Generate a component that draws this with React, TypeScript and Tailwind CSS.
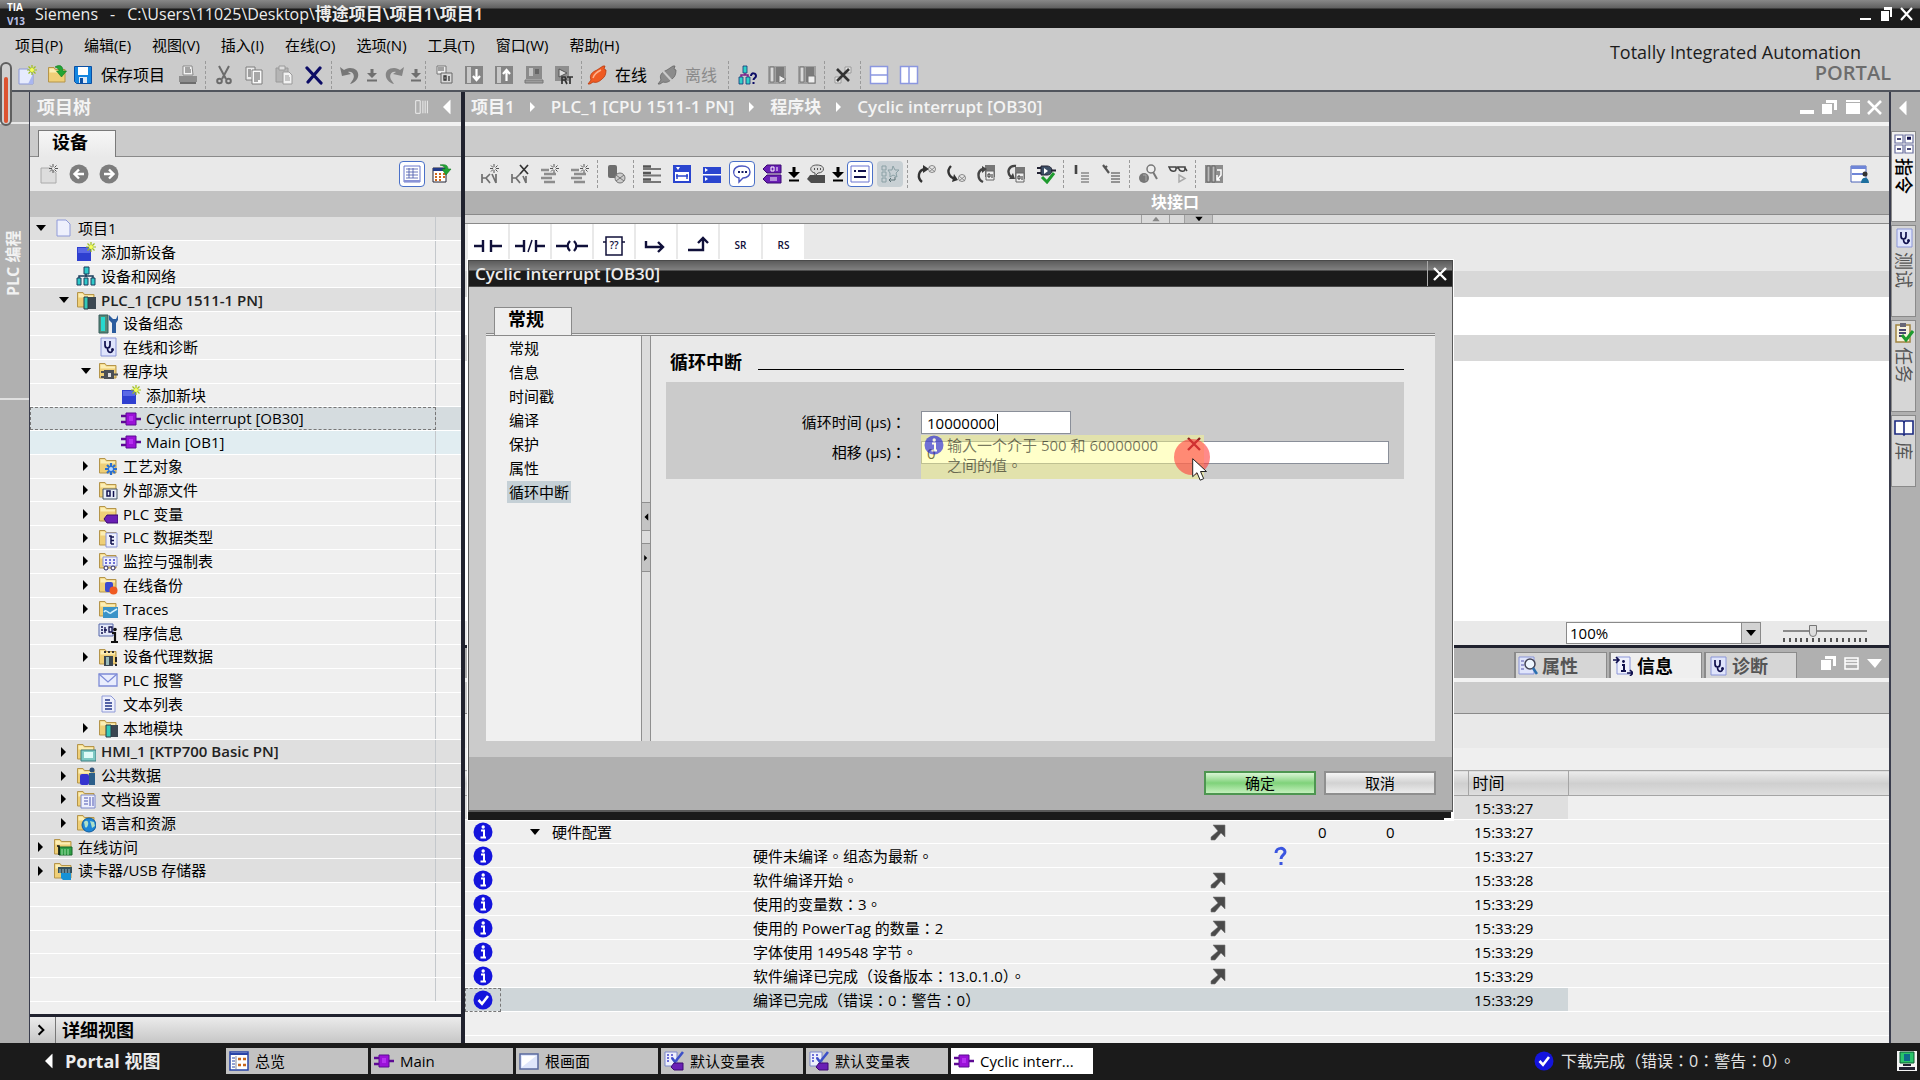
import React, { useState } from "react";

type Draw = React.ReactNode;

const folder = (
  <g>
    <path d="M1.5 2.5h5.5l1.5 2H18v12.500H1.500z" fill="#efcf77" stroke="#b5954a" />
    <path d="M2.500 3.500h4l1.500 2h9v2H2.500z" fill="#fbeeb5" />
  </g>
);
const star = (
  <g stroke="#9fbf1c" strokeWidth="1.200">
    <path d="M15 0v10M10 5h10M11.500 1.500l7 7M18.500 1.500l-7 7" />
    <circle cx="15" cy="5" r="2" fill="#f6ff5a" stroke="none" />
  </g>
);
const grayStar = <path d="M14 0v3M14 6v3M10 4.500h3M16 4.500h3M11 1.500l2 2M15.500 5.500l2 2M17.500 1.500l-2 2M13 5.500l-2 2" stroke="#555" strokeWidth="1" />;
const page = <path d="M4 2h9l4 4v12H4z" fill="#eef0fc" stroke="#8f9ad8" />;
const plug = (
  <path d="M1 19l3-4c-2-5 1-8 6-10l6-4h2l-1 3 2 1c0 4-1 7-4 9-3 3-6 4-9 3l-3 2z" />
);

const icons: Record<string, Draw> = {
  newProject: (<g><path d="M2 4h9l5 5v10H2z" fill="#e6ebfd" stroke="#8a97d6" /><path d="M11 19l5-10v10z" fill="#a9b6f0" />{star}</g>),
  openProject: (<g>{folder}<path d="M8 2c5-3 8-1 8 4h3.500l-5 6-5-6H12c0-2-1-3-4-4z" fill="#22a534" stroke="#0d7a1e" strokeWidth=".6" /></g>),
  save: (<g><path d="M1.500 1.500h17v17h-15l-2-2z" fill="#1486e0" stroke="#0b4fa3" /><path d="M5 2h10v8H5z" fill="#fff" /><path d="M6 12h8v6H6z" fill="#dfe9f5" /><path d="M7 13h3v5H7z" fill="#0b4fa3" /></g>),
  print: (<g><path d="M5 1h9l1 9H5z" fill="#f4f4f4" stroke="#888" /><path d="M7 3h5M7 5h6M7 7h6" stroke="#555" /><path d="M1 11h18v6H1z" fill="#8e8e8e" /><path d="M2 17h16v2H2z" fill="#6d6d6d" /></g>),
  cut: (<g fill="none" stroke="#6b6b6b" strokeWidth="2"><path d="M5 1l7 13M15 1L8 14" /><circle cx="5.500" cy="16" r="2.300" /><circle cx="14.500" cy="16" r="2.300" /></g>),
  copy: (<g fill="#ececec" stroke="#7d7d7d"><path d="M2 2h9v13H2z" /><path d="M8 5h10v14H8z" fill="#fafafa" /><path d="M10 8h6M10 10h6M10 12h6M10 14h6M10 16h4M4 5h3M4 7h3M4 9h3M4 11h3" stroke="#555" /></g>),
  paste: (<g stroke="#9a9a9a"><path d="M2 3h12v14H2z" fill="#b5b5b5" /><path d="M5 1h6v4H5z" fill="#ddd" /><path d="M9 7h6l3 3v9H9z" fill="#f2f2f2" /><path d="M11 11h4M11 13h5M11 15h5" /></g>),
  del: <path d="M3 3l14 15M16 3L4 17" stroke="#0c0c66" strokeWidth="3.200" strokeLinecap="round" />,
  undo: <path d="M0 2l2 9 9-2-3-2c5-1 8 4 4 9l-2 3C21 16 21 3 10 3c-3 0-4 1-6 2z" fill="#777" />,
  redo: <path d="M20 2l-2 9-9-2 3-2c-5-1-8 4-4 9l2 3C-1 16-1 3 10 3c3 0 4 1 6 2z" fill="#858585" />,
  compile: (<g><path d="M3 1h9v8H3z" fill="#eee" stroke="#777" /><path d="M4 3h6M4 5h6" stroke="#555" /><path d="M7 8h11v10H7z" fill="#d8d8d8" stroke="#666" /><path d="M10 11h2v4h-2zM15 11v5" fill="none" stroke="#333" strokeWidth="1.300" /></g>),
  download: (<g><path d="M1 1h18v18H1z" fill="#858585" /><path d="M3 2h4v16H3z" fill="#c9c9c9" /><path d="M12.500 4v10M9 11l3.500 4 3.500-4" fill="none" stroke="#fff" strokeWidth="2.200" /></g>),
  upload: (<g><path d="M1 1h18v18H1z" fill="#858585" /><path d="M3 2h4v16H3z" fill="#c9c9c9" /><path d="M12.500 16V6M9 9l3.500-4L16 9" fill="none" stroke="#fff" strokeWidth="2.200" /></g>),
  simulate: (<g><path d="M2 1h16v13H2z" fill="#8b8b8b" /><path d="M5 3h4v8H5z" fill="#c4c4c4" /><path d="M11 4h4v5h-4z" fill="#666" /><path d="M1 15h18v3H1z" fill="#9c9c9c" stroke="#777" /></g>),
  runtime: (<g><path d="M1 1h14v15H1z" fill="#8e8e8e" /><path d="M5 4l8 4-8 4z" fill="#ddd" stroke="#555" /><path d="M8 19v-7h3l1 2-1 1H8m3 0l2 4M13 12h6M16 12v7" fill="none" stroke="#333" strokeWidth="1.700" /></g>),
  online: <g fill="#ef5a22" stroke="#b83a0e" strokeWidth=".8">{plug}<path d="M6 13c1-4 4-6 8-8" fill="none" stroke="#ffb08a" strokeWidth="1.500" /></g>,
  offline: (<g fill="#8b8b8b" stroke="#666" strokeWidth=".8">{plug}<path d="M5 5l10 11" stroke="#cbcbcb" strokeWidth="2" /></g>),
  access: (<g><path d="M6 1h4v7H6zM2 12h4v7H2zM9 12h4v7H9z" fill="#2fd0c8" stroke="#137" strokeWidth=".8" /><path d="M8 8v2M4 12v-2h7v2" fill="none" stroke="#7a1e8a" strokeWidth="1.500" /><path d="M14 11c0-4 5-3 5 0 0 2-2.500 2-2.500 4M16.500 17v2" fill="none" stroke="#0c0c66" strokeWidth="2" /></g>),
  startCpu: (<g><path d="M1 1h18v18H1z" fill="#a0a0a0" /><path d="M3 2h4v15H3z" fill="#d9d9d9" stroke="#777" /><path d="M9 2h8v15H9z" fill="#7b7b7b" /><path d="M12 10l7 4-7 4z" fill="#eee" stroke="#777" /></g>),
  stopCpu: (<g><path d="M1 1h18v18H1z" fill="#a0a0a0" /><path d="M3 2h4v15H3z" fill="#d9d9d9" stroke="#777" /><path d="M9 2h8v15H9z" fill="#7b7b7b" /><path d="M11 11h7v7h-7z" fill="#eee" stroke="#777" /></g>),
  crossRef: (<g><path d="M12 2h6v6h-6zM2 12h6v6H2z" fill="#e8e8e8" stroke="#999" /><path d="M4 4l12 12M16 4L4 16" stroke="#333" strokeWidth="2.600" /></g>),
  splitH: (<g fill="#fff" stroke="#8b97e0" strokeWidth="1.500"><path d="M1.500 1.500h17v17h-17z" /><path d="M1.500 10h17" /></g>),
  splitV: (<g fill="#fff" stroke="#8b97e0" strokeWidth="1.500"><path d="M1.500 1.500h17v17h-17z" /><path d="M10 1.500v17" /></g>),
  dd: (<g fill="#6f6f6f"><path d="M8.500 4h3v4H15l-5 5-5-5h3.500zM5 14.500h10v2H5z" /></g>),
  ddBlack: (<g fill="#000"><path d="M8.500 3h3v5H16l-6 6-6-6h4.500zM5 15.500h10v2H5z" /></g>),
  newItem: (<g><path d="M2 4h9l6 5v10H2z" fill="#ddd" stroke="#aaa" />{grayStar}</g>),
  back: (<g><circle cx="10" cy="10" r="9.500" fill="#7d7d7d" /><path d="M15 10H6M10 5.500L5.500 10l4.500 4.500" fill="none" stroke="#fff" strokeWidth="2.400" /></g>),
  forward: (<g><circle cx="10" cy="10" r="9.500" fill="#7d7d7d" /><path d="M5 10h9M10 5.500l4.500 4.500-4.500 4.500" fill="none" stroke="#fff" strokeWidth="2.400" /></g>),
  list: (<g><path d="M2 2h16v16H2z" fill="#fff" stroke="#6a78cc" /><path d="M4 5h12M4 8h12M4 11h12M4 14h12M7 4v10M11 4v10" stroke="#4454a8" strokeWidth=".8" /><path d="M2 17h16" stroke="#8a93d6" strokeWidth="2" /></g>),
  gridGo: (<g><path d="M1 4h13v14H1z" fill="#fff" stroke="#223" /><path d="M1 4h13v3H1z" fill="#223a88" /><path d="M3 10h2M7 10h2M11 10h2M3 13h2M7 13h2M11 13h2M3 16h2M7 16h2" stroke="#d0661a" strokeWidth="2" /><path d="M8 1c5-1 8 0 8 4h3l-5 6-4-6h3c0-2-1-3-5-4z" fill="#22a534" stroke="#0d7a1e" strokeWidth=".6" /></g>),
  netIns: (<g fill="none" stroke="#6f6f6f" strokeWidth="1.700"><path d="M2 10v9M2 14h4M10 10l-4 4 4 5M12 10l4 9M16 10v9" />{grayStar}</g>),
  netDel: (<g fill="none" stroke="#6f6f6f" strokeWidth="1.700"><path d="M2 10v9M2 14h4M10 10l-4 4 4 5M13 12l3 7M16 12v7" /><path d="M10 1l8 9M18 1l-8 9" stroke="#333" /></g>),
  rowIns: (<g><path d="M1 6h8M4 10h12M1 14h11M4 18h11" stroke="#8d8d8d" strokeWidth="2.400" />{grayStar}</g>),
  dbStack: (<g><rect x="2" y="1" width="9" height="13" rx="2" fill="#6e6e6e" /><circle cx="14" cy="14" r="5" fill="#ccc" stroke="#777" /><path d="M10 11l8 6M18 11l-8 6" stroke="#777" /></g>),
  treeGray: (<g><path d="M1 2.500h8M1 9h8M1 15.500h8" stroke="#555" strokeWidth="2.600" /><path d="M1 5h18M1 11.500h18M1 18h18" stroke="#777" strokeWidth="2" /></g>),
  netOpen: (<g><path d="M1 1h18v18H1z" fill="#2a45cf" /><path d="M3 8h14v9H3z" fill="#fff" /><path d="M4 12h12M5 10v5M15 10v5" stroke="#2a45cf" strokeWidth="1.500" /><path d="M4 3h4l-2 3z" fill="#fff" /></g>),
  netClose: (<g><path d="M1 3h18v16H1z" fill="#2a45cf" /><path d="M3 4l3 2-3 2zM3 13l3 2-3 2zM1 10h18v1.500H1z" fill="#fff" /></g>),
  comment: (<g><path d="M10 2c11 0 10 12 1 12l-4 4v-4C-1 12 0 2 10 2z" fill="#fff" stroke="#4a55c0" strokeWidth="1.400" /><path d="M6 8h2M9.500 8h2M13 8h2" stroke="#111a66" strokeWidth="2" /></g>),
  tagPurple: (<g><path d="M5 1h14v8H5L1 5zM5 11h14v8H5l-4-4z" fill="#6a1fb5" stroke="#3c0a73" /><path d="M9 3h3v4H9zM15 3v4M8 14h7M8 16h7" fill="none" stroke="#fff" /></g>),
  tagGray: (<g><path d="M7 11h12v8H5l-4-4 3-4z" fill="#4d4d4d" /><path d="M11 1c9 0 8 8 1 8l-3 3V9C3 8 3 1 11 1z" fill="#ddd" stroke="#555" /><path d="M8 5h1M11 5h1M14 5h1" stroke="#222" strokeWidth="1.500" /></g>),
  details: (<g><path d="M1 2h18v16H1z" fill="#fff" stroke="#6a75d0" /><path d="M4 7h2M8 7h8M4 13h12" stroke="#10104d" strokeWidth="2" /></g>),
  favGray: (<g stroke="#8aa0a5" fill="none"><path d="M2 2h4v4H2zM2 8h4v4H2zM2 14h4v4H2z" /><path d="M13 2l2 4 4 0-3 3 1 4-4-2-3 2 0-4-2-3 4 0z" /><path d="M15 13v3H9M11 14l-2 2 2 2" stroke="#5a7075" /></g>),
  arrUp: (<g fill="none"><path d="M6 18C1 14 2 6 9 5" stroke="#333" strokeWidth="2.400" /><path d="M7 1l6 4-6 4z" fill="#333" /><circle cx="16" cy="5" r="3.500" stroke="#888" /><path d="M13 3l6 5M19 3l-6 5" stroke="#888" /></g>),
  arrDown: (<g fill="none"><path d="M5 2c-5 5-2 11 4 13" stroke="#333" strokeWidth="2.400" /><path d="M6 18l6-2-4-6z" fill="#333" /><circle cx="16" cy="14" r="3.500" stroke="#888" /><path d="M13 12l6 5M19 12l-6 5" stroke="#888" /></g>),
  syncA: (<g><path d="M9 1h10v12H9z" fill="#777" /><path d="M10 7h8v9h-8z" fill="#eee" stroke="#666" /><path d="M12 10h2v3h-2zM16 10v4" fill="none" stroke="#333" /><path d="M7 18C1 15 1 7 7 5" fill="none" stroke="#444" strokeWidth="2.400" /><path d="M6 2l5 3-5 4z" fill="#444" /></g>),
  syncB: (<g><path d="M9 3h10v12H9z" fill="#777" /><path d="M10 9h8v9h-8z" fill="#eee" stroke="#666" /><path d="M12 12h2v3h-2zM16 12v4" fill="none" stroke="#333" /><path d="M10 2C3 1 0 8 5 13" fill="none" stroke="#444" strokeWidth="2.400" /><path d="M3 15l6 0-2-6z" fill="#444" /></g>),
  check: (<g><path d="M5 2h6c4 0 5 3 5 4.500S15 11 11 11H5z" fill="#3d4f66" stroke="#223" /><path d="M1 4h4M1 9h4M15 6.500h5" stroke="#223" strokeWidth="2" /><path d="M8 4l4 3-4 3z" fill="#fff" /><path d="M6 13l5 5 7-9" fill="none" stroke="#1e9a2e" strokeWidth="3" /></g>),
  indent: (<g><path d="M4 1v9" stroke="#444" strokeWidth="2.600" /><path d="M9 9h8M9 12h8M9 15h8M9 18h8" stroke="#888" strokeWidth="1.700" /></g>),
  outdent: (<g><path d="M1 1l6 8M5 2L3 4" stroke="#555" strokeWidth="2.200" /><path d="M9 9h9M9 12h9M9 15h9M9 18h9" stroke="#777" strokeWidth="1.700" /></g>),
  findTag: (<g><circle cx="13" cy="5" r="4" fill="#eee" stroke="#777" strokeWidth="1.500" /><path d="M15 8l4 7" stroke="#777" strokeWidth="2" /><circle cx="6" cy="14" r="5" fill="#777" /><path d="M5 11h3v6" stroke="#aaa" fill="none" /></g>),
  glasses: (<g fill="none" stroke="#444" strokeWidth="1.500"><path d="M1 3h7v2c0 3-5 3-6 0zM10 3h7v2c0 3-5 3-6 0z" /><path d="M8 4h2M17 4l2 3" /><path d="M11 11l6 3.500-6 3.500z" stroke="#aaa" /></g>),
  snapshot: (<g><path d="M1 1h18v18H1z" fill="#8d8d8d" /><path d="M3 2h3v16H3zM8 2h3v16H8z" fill="#bbb" stroke="#666" /><path d="M13 6h4v5l-4 5M13 11v5h3" stroke="#fff" fill="none" strokeWidth="1.500" /></g>),
  layoutUser: (<g><path d="M1 2h15v16H1z" fill="#fff" stroke="#4a62b8" /><path d="M1 2h15v3H1z" fill="#6f86d8" /><path d="M2 10h14" stroke="#6f86d8" strokeWidth="2" /><circle cx="15" cy="10" r="2.500" fill="#333" /><path d="M11 19c0-7 8-7 8 0z" fill="#1d6f9e" /></g>),
  project: page,
  addNew: (<g><path d="M1 5h14v14H1z" fill="#2e3fd0" /><path d="M2 6h12v5H2z" fill="#5a68e6" />{star}</g>),
  network: (<g><path d="M8 1h5v7H8zM1 12h4v7H1zM8 12h4v7H8zM15 12h4v7h-4z" fill="#2fc9c9" stroke="#1a3d5c" /><path d="M10 8v3M3 12v-2h14v2" fill="none" stroke="#1a3d5c" strokeWidth="1.500" /></g>),
  plc: (<g>{folder}<path d="M8 7h12v12H8z" fill="#3a4650" /><path d="M8 7h4v12H8z" fill="#35c9b8" stroke="#2a3a44" /></g>),
  config: (<g><path d="M1 1h9v18H1z" fill="#587" stroke="#365a5a" /><path d="M3 3h4v14H3z" fill="#27d9cf" /><path d="M11 1v5l3 3v10h4V9l2-3V1l-2 4h-3z" fill="#2b5c9e" /></g>),
  diag: (<g><path d="M3 1h15v18H3z" fill="#dfe4fb" stroke="#8a95d8" /><path d="M7 4v4c0 4 5 4 5 0V4M9.500 11c0 6 5 5 5 2" fill="none" stroke="#10104d" strokeWidth="1.700" /><circle cx="14.500" cy="12.500" r="1.500" fill="#10104d" /></g>),
  blocks: (<g>{folder}<path d="M6 9h10v9H6z" fill="#4a4f55" /><path d="M3 11h4M3 16h4M15 13.500h5" stroke="#4a4f55" strokeWidth="2" /><path d="M10 12h3v4h-3z" fill="#ddd" /></g>),
  ob: (<g><path d="M5 4h10v12H5z" fill="#9a12d8" stroke="#5d0a94" /><path d="M0 7h5M0 13h5M15 10h5" stroke="#5d0a94" strokeWidth="2.600" /><path d="M8 7h4v5H8z" fill="#b530f0" /></g>),
  tech: (<g>{folder}<path d="M13 7v12M7 13h12M9 9l8 8M17 9l-8 8" stroke="#2a6fd0" strokeWidth="2.200" /><circle cx="13" cy="13" r="2" fill="#bcd8ff" /></g>),
  source: (<g>{folder}<path d="M5 9h14v10H5z" fill="#e8eef8" stroke="#456" /><path d="M9 11h3v5H9zM15.500 11v6" fill="none" stroke="#10104d" strokeWidth="1.500" /></g>),
  tags: (<g>{folder}<path d="M9 11h11v8H9l-3-4z" fill="#6a1fb5" stroke="#3c0a73" /></g>),
  types: (<g>{folder}<path d="M8 5h11v14H8z" fill="#eef0fc" stroke="#8a95d8" /><path d="M11 8h2v8M13 9h3M13 12.500h3M13 16h3" stroke="#10104d" fill="none" strokeWidth="1.500" /></g>),
  watch: (<g>{folder}<path d="M5 6h14v9H5z" fill="#eef0fc" stroke="#8a95d8" /><path d="M7 9h2M11 9h2M15 9h2M7 12h2M11 12h2M15 12h2" stroke="#44c" strokeWidth="1.500" /><circle cx="8" cy="17" r="2" fill="#fff" stroke="#226" /><circle cx="15" cy="17" r="2" fill="#fff" stroke="#226" /></g>),
  backup: (<g>{folder}<rect x="7" y="7" width="8" height="10" rx="2" fill="#3a49d0" /><circle cx="15.500" cy="15.500" r="4" fill="#ef5a22" /></g>),
  traces: (<g>{folder}<path d="M5 8h15v11H5z" fill="#3a93c8" /><path d="M6 13c3-4 5 4 8 0l5-3" fill="none" stroke="#d7f3ff" strokeWidth="1.500" /></g>),
  progInfo: (<g><path d="M1 1h14v12H1z" fill="#e3e8f8" stroke="#5566aa" /><path d="M3 4h2M3 7h2M3 10h2M7 4v6M6 7h3M11 4h3v5h-3z" fill="none" stroke="#10104d" strokeWidth="1.300" /><path d="M14 10h3v8M13 19h7" stroke="#111" strokeWidth="2.200" fill="none" /><circle cx="17" cy="6.500" r="1.800" fill="#111" /></g>),
  proxy: (<g>{folder}<path d="M6 9h9v10H6z" fill="#3a4650" /><path d="M6 5h2M10 5h2M14 5h2" stroke="#333" strokeWidth="2" /><path d="M8 10h3v8H8z" fill="#9bb" /><path d="M18 10v5M18 17v2" stroke="#222" strokeWidth="2" /></g>),
  mail: (<g fill="#e9edfd" stroke="#7d8bd6" strokeWidth="1.300"><path d="M1 4h18v12H1z" /><path d="M1 4l9 8 9-8" fill="none" /></g>),
  textList: (<g>{page}<path d="M7 6h5M7 9h7M7 12h7M7 15h7" stroke="#223388" strokeWidth="1.600" /></g>),
  modules: (<g>{folder}<path d="M8 7h12v12H8z" fill="#3a4650" /><path d="M8 7h5v12H8z" fill="#35c9b8" stroke="#2a3a44" /></g>),
  hmi: (<g>{folder}<path d="M5 8h15v11H5z" fill="#7fc9c4" stroke="#3d7d80" /><path d="M8 10h9v6H8z" fill="#dffbf8" /></g>),
  common: (<g>{folder}<rect x="4" y="8" width="9" height="11" rx="2" fill="#3434cf" /><circle cx="16" cy="4" r="2.500" fill="#2c4f78" /><path d="M13 7h6v12h-6z" fill="#2c5f8a" /></g>),
  docs: (<g>{folder}<path d="M5 6h14v13H5z" fill="#eef0fc" stroke="#7d88cc" /><path d="M8 9h4M8 12h4M8 15h4M14 8v9M17 8v9" stroke="#4a55b0" /></g>),
  lang: (<g>{folder}<circle cx="13" cy="12" r="7" fill="#1d86d6" stroke="#0f5c9e" /><path d="M8 9c3-3 5 0 4 3s-2 3-3 2zM14 8l4 1 1 4-3 2-1-4z" fill="#aee0c8" /></g>),
  access2: (<g>{folder}<path d="M6 10h13v8H6z" fill="#2f9e45" stroke="#17662a" /><path d="M9 12v6M12 12v6M15 12v6" stroke="#9fe0a8" /><path d="M4 9h2v9" stroke="#111" strokeWidth="1.500" fill="none" /></g>),
  card: (<g>{folder}<path d="M5 6h14v6H5z" fill="#35505c" /><path d="M7 8v4M10 8v4M13 8v4M16 8v4" stroke="#9bc" /><path d="M8 12h10v7H10l-2-2z" fill="#1692d6" /></g>),
  overview: (<g><path d="M1 1h18v18H1z" fill="#fff" stroke="#2a45a8" strokeWidth="1.500" /><path d="M1 3h18" stroke="#2a45a8" strokeWidth="2" /><path d="M3 7h3M3 10h3M3 13h3M3 16h3" stroke="#2a45a8" /><path d="M9 8h3M14 8h3M9 14h3M14 14h3" stroke="#c8661a" strokeWidth="2.500" /><path d="M7 5v13" stroke="#889" /></g>),
  screen: (<g><path d="M1 3h18v15H1z" fill="#dfe6fb" stroke="#5a6a9e" strokeWidth="1.500" /><path d="M3 5h14l-14 11z" fill="#fff" /></g>),
  tagTable: (<g><path d="M1 1h12v14H1z" fill="#eef0fc" stroke="#7d88cc" /><path d="M3 4h2M7 4h2M3 7h2M7 7h2M3 10h2" stroke="#44c" strokeWidth="1.500" /><path d="M8 7l3 4 8-10" fill="none" stroke="#3c50c8" strokeWidth="2.600" /><path d="M10 12h9v7h-9l-3-3z" fill="#6a1fb5" stroke="#3c0a73" /></g>),
  props: (<g><path d="M1 1h15v17H1z" fill="#dfe4fb" stroke="#8a95d8" /><path d="M3 5h3M3 9h3M3 13h3" stroke="#55a" /><circle cx="12" cy="8" r="5" fill="#eef6ff" stroke="#445" strokeWidth="1.500" /><path d="M15 12l4 6" stroke="#2a6fb0" strokeWidth="2.600" /></g>),
  infoTab: (<g><path d="M4 1h13v17H4z" fill="#eef0fc" stroke="#8a95d8" /><path d="M9 9h2v6M8 15h5" fill="none" stroke="#10104d" strokeWidth="2" /><circle cx="10.500" cy="5.500" r="1.400" fill="#10104d" /><path d="M0 4h5M3 1l3 3-3 3M14 17h5M17 14l3 3-3 3" fill="none" stroke="#10104d" strokeWidth="1.600" /></g>),
  instr: (<g fill="#fff" stroke="#6a70a0" strokeWidth="1.200"><path d="M1 1h8v8H1zM11 1h8v8h-8zM1 11h8v8H1zM11 11h8v8h-8z" /><path d="M3 5h4M13 5h4M13 3.500h4M3 15h4M13 15h4" stroke="#10104d" strokeWidth="1.500" /></g>),
  tasks: (<g><path d="M2 2h14v17H2z" fill="#f6f1dc" stroke="#a08440" strokeWidth="1.500" /><path d="M6 0h6v4H6z" fill="#667" /><path d="M5 7h7M5 10h7M5 13h5" stroke="#10104d" strokeWidth="1.500" /><path d="M8 12l4 5 7-9" fill="none" stroke="#1e9a2e" strokeWidth="3" /></g>),
  book: (<g fill="#fff" stroke="#1c2a80" strokeWidth="1.600"><path d="M1 3h8l1 1 1-1h8v13h-8l-1 1-1-1H1z" /><path d="M10 4v13" /></g>),
  info: (<g><circle cx="10" cy="10" r="9.500" fill="#1414dc" /><circle cx="10.200" cy="5" r="1.700" fill="#fff" /><path d="M8 8.500h3V15M7.500 15.500h5.500" fill="none" stroke="#fff" strokeWidth="2" /></g>),
  ok: (<g><circle cx="10" cy="10" r="9.500" fill="#1414dc" /><path d="M5.500 10l3.500 3.800L15 6" fill="none" stroke="#fff" strokeWidth="2.600" /></g>),
  goto: <path d="M5 3h12v12l-4-4-6 7H3v-3l7-6z" fill="#4a4a4a" stroke="#777" strokeWidth=".6" />,
  help: (<g><path d="M6 7c0-6 9-6 9-1 0 3-4 3-4 7M11 16v3" fill="none" stroke="#3a55e0" strokeWidth="3" /></g>),
  pc: (<g><path d="M0 0h20v20H0z" fill="#f4f4f4" /><path d="M3 1h14v11H3z" fill="#29c46a" stroke="#0a5a30" /><path d="M7 3h6v7H7z" fill="#0c6a8a" /><path d="M6 13h8v2H6zM2 16h16v3H2z" fill="#223" /></g>),
  pause: (<g fill="none" stroke="#f4f4f4"><path d="M3 3h5v14H3z" /><path d="M11 3v14M13.500 3v14M16 3v14" /></g>),
};

function Ic({ n, s = "w-5 h-5" }: { n: string; s?: string }) {
  return (
    <svg viewBox="0 0 20 20" className={`${s} shrink-0`} fill="none" aria-hidden="true">
      {icons[n]}
    </svg>
  );
}

function Tool({ n, look = "" }: { n: string; look?: string }) {
  return (
    <span className="flex w-[30px] shrink-0 justify-center">
      <button type="button" aria-label={n} className={`flex h-[26px] w-[26px] items-center justify-center rounded-sm ${look}`}>
        <Ic n={n} />
      </button>
    </span>
  );
}
const ACTIVE = "border border-[#4a70c8] bg-white";
const Drop = ({ n = "dd" }: { n?: string }) => (
  <button type="button" aria-label="展开" className="flex h-[26px] w-[14px] shrink-0 items-center justify-center">
    <Ic n={n} />
  </button>
);
const Sep = () => <span className="ml-[2px] mr-[3px] h-7 w-0 shrink-0 border-l border-dashed border-[#9a9a9a]" />;

const Tri = ({ open, c = "fill-black" }: { open?: boolean; c?: string }) => (
  <svg viewBox="0 0 10 10" className={`h-[10px] w-[10px] ${c}`} aria-hidden="true">
    <path d={open ? "M0 2h10L5 8z" : "M2 0v10l5-5z"} />
  </svg>
);

const menus = ["项目(P)", "编辑(E)", "视图(V)", "插入(I)", "在线(O)", "选项(N)", "工具(T)", "窗口(W)", "帮助(H)"];

type Node = { l: number; i: string; t: string; e?: "o" | "c"; k?: "head" | "sel" | "rel"; b?: boolean };
const tree: Node[] = [
  { l: 0, i: "project", t: "项目1", e: "o", k: "head" },
  { l: 1, i: "addNew", t: "添加新设备" },
  { l: 1, i: "network", t: "设备和网络" },
  { l: 1, i: "plc", t: "PLC_1 [CPU 1511-1 PN]", e: "o", k: "head", b: true },
  { l: 2, i: "config", t: "设备组态" },
  { l: 2, i: "diag", t: "在线和诊断" },
  { l: 2, i: "blocks", t: "程序块", e: "o" },
  { l: 3, i: "addNew", t: "添加新块" },
  { l: 3, i: "ob", t: "Cyclic interrupt [OB30]", k: "sel" },
  { l: 3, i: "ob", t: "Main [OB1]", k: "rel" },
  { l: 2, i: "tech", t: "工艺对象", e: "c" },
  { l: 2, i: "source", t: "外部源文件", e: "c" },
  { l: 2, i: "tags", t: "PLC 变量", e: "c" },
  { l: 2, i: "types", t: "PLC 数据类型", e: "c" },
  { l: 2, i: "watch", t: "监控与强制表", e: "c" },
  { l: 2, i: "backup", t: "在线备份", e: "c" },
  { l: 2, i: "traces", t: "Traces", e: "c" },
  { l: 2, i: "progInfo", t: "程序信息" },
  { l: 2, i: "proxy", t: "设备代理数据", e: "c" },
  { l: 2, i: "mail", t: "PLC 报警" },
  { l: 2, i: "textList", t: "文本列表" },
  { l: 2, i: "modules", t: "本地模块", e: "c" },
  { l: 1, i: "hmi", t: "HMI_1 [KTP700 Basic PN]", e: "c", k: "head", b: true },
  { l: 1, i: "common", t: "公共数据", e: "c", k: "head" },
  { l: 1, i: "docs", t: "文档设置", e: "c", k: "head" },
  { l: 1, i: "lang", t: "语言和资源", e: "c", k: "head" },
  { l: 0, i: "access2", t: "在线访问", e: "c", k: "head" },
  { l: 0, i: "card", t: "读卡器/USB 存储器", e: "c", k: "head" },
];
const indent = ["pl-px", "pl-[24px]", "pl-[46px]", "pl-[69px]"];
const rowBg = {
  head: "bg-[#dfdfdf]",
  sel: "bg-[#d5dcdf]",
  rel: "bg-[#e1edf1]",
  none: "bg-[#efefef]",
};

function ProjectTree() {
  return (
    <div className="min-h-0 flex-1 bg-[#efefef] pb-3">
      <ul className="grid h-full auto-rows-fr">
        {tree.map((r) => (
          <li key={r.t} className={`flex min-h-0 border-b border-white ${rowBg[r.k ?? "none"]}`}>
            <button
              type="button"
              className={`flex min-w-0 flex-1 items-center border-r border-r-[#c4c8cc] text-left ${indent[r.l]} ${r.k === "sel" ? "outline-1 -outline-offset-1 outline-dashed outline-[#777]" : ""}`}
            >
              <span className="flex w-5 justify-center">{r.e && <Tri open={r.e === "o"} />}</span>
              <span className="flex w-6 justify-center"><Ic n={r.i} /></span>
              <span className={`ml-[3px] whitespace-nowrap ${r.b ? "font-semibold text-[#222]" : ""}`}>{r.t}</span>
            </button>
            <span className="w-[25px]" />
          </li>
        ))}
        {[1, 2, 3, 4, 5].map((n) => (
          <li key={n} className="flex border-b border-white">
            <span className="flex-1 border-r border-r-[#c4c8cc]" />
            <span className="w-[25px]" />
          </li>
        ))}
      </ul>
    </div>
  );
}

const crumbs = ["项目1", "PLC_1 [CPU 1511-1 PN]", "程序块", "Cyclic interrupt [OB30]"];

const ladder: [string, React.ReactNode][] = [
  ["常开触点", <path key="p" d="M2 10h9M11 4v12M19 4v12M19 10h11" />],
  ["常闭触点", <g key="p"><path d="M1 10h9M10 4v12M22 4v12M22 10h9" /><path d="M14 16l4-12" strokeWidth="1.500" /></g>],
  ["线圈", <path key="p" d="M0 10h11M14 5c-3 3-3 7 0 10M18 5c3 3 3 7 0 10M21 10h11" />],
  ["空功能框", <g key="p" strokeWidth="1.500"><path d="M8 1h16v18H8zM5 6h3M24 6h3" /></g>],
  ["打开分支", <path key="p" d="M6 5v6h17M18 6l5 5-5 5" />],
  ["关闭分支", <path key="p" d="M6 14h15V3M16 7l5-5 5 5" />],
];

type Msg = { i: string; t: string; time: string; go?: boolean; q?: boolean; n?: boolean; sel?: boolean; group?: boolean };
const msgs: Msg[] = [
  { i: "", t: "", time: "15:33:27" },
  { i: "info", t: "硬件配置", time: "15:33:27", go: true, n: true, group: true },
  { i: "info", t: "硬件未编译。组态为最新。", time: "15:33:27", q: true },
  { i: "info", t: "软件编译开始。", time: "15:33:28", go: true },
  { i: "info", t: "使用的变量数：3。", time: "15:33:29", go: true },
  { i: "info", t: "使用的 PowerTag 的数量：2", time: "15:33:29", go: true },
  { i: "info", t: "字体使用 149548 字节。", time: "15:33:29", go: true },
  { i: "info", t: "软件编译已完成（设备版本：13.0.1.0）。", time: "15:33:29", go: true },
  { i: "ok", t: "编译已完成（错误：0：警告：0）", time: "15:33:29", sel: true },
];

function Messages() {
  return (
    <table className="w-full table-fixed border-collapse font-['Open_Sans','Noto_Sans_CJK_TC',sans-serif] leading-5">
      <colgroup>
        <col className="w-9" /><col className="w-[252px]" /><col className="w-[433px]" /><col className="w-[64px]" />
        <col className="w-[60px]" /><col className="w-[44px]" /><col className="w-[90px]" /><col className="w-[24px]" />
        <col className="w-[100px]" /><col />
      </colgroup>
      <thead>
        <tr className="h-[25px] border-y border-[#a5a5a5] bg-linear-to-b from-[#ebebeb] via-[#cfcfcf] to-[#dedede] text-left">
          <th colSpan={8} className="border-r border-[#a5a5a5]" />
          <th className="border-r border-[#a5a5a5] pl-1 font-['Open_Sans','Noto_Sans_CJK_SC',sans-serif] text-base font-normal leading-5">时间</th>
          <th />
        </tr>
      </thead>
      <tbody>
        {msgs.map((m, k) => {
          const bg = m.sel ? "bg-[#cfd6d9]" : k === 0 ? "bg-[#dfdfdf]" : "";
          return (
            <tr key={k} className="h-6 border-b border-white">
              <td className={`${bg} ${m.sel ? "outline-1 -outline-offset-1 outline-dashed outline-[#777]" : ""}`}>
                <span className="flex justify-center pr-px">{m.i && <Ic n={m.i} />}</span>
              </td>
              <td className={bg}>
                {m.group && (
                  <span className="flex items-center gap-3 pl-[29px]"><Tri open />{m.t}</span>
                )}
              </td>
              <td className={`${bg} whitespace-nowrap`}>{!m.group && m.t}</td>
              <td className={bg}><span className="flex justify-center">{m.go && <Ic n="goto" />}</span></td>
              <td className={bg}><span className="flex justify-center">{m.q && <Ic n="help" />}</span></td>
              <td className={`${bg} pl-2`}>{m.n && "0"}</td>
              <td className={`${bg} pl-8`}>{m.n && "0"}</td>
              <td className={bg} />
              <td className={`${bg} pl-[6px]`}>{m.time}</td>
              <td />
            </tr>
          );
        })}
        <tr className="h-6 border-b border-white"><td colSpan={10} /></tr>
      </tbody>
    </table>
  );
}

const navItems = ["常规", "信息", "时间戳", "编译", "保护", "属性", "循环中断"];

function Dialog() {
  const [cycle, setCycle] = useState("10000000");
  const [phase, setPhase] = useState("0");
  const field = "h-[23px] rounded-none border border-[#8a8f99] bg-white px-[5px] text-[15px] outline-none";
  return (
    <section role="dialog" aria-label="Cyclic interrupt" className="absolute left-[467px] top-[259px] flex h-[562px] w-[987px] flex-col border border-white bg-[#cbcbcb]">
      <header className="flex h-[27px] shrink-0 items-center justify-between border border-[#4a4a4a] bg-[linear-gradient(#5c5c5c,#808080_9px,#1b1b1b_10px,#1b1b1b)] pl-[6px] text-[17px] font-semibold leading-6 text-[#ececec]">
        <h2>Cyclic interrupt [OB30]</h2>
        <button type="button" aria-label="关闭" className="flex h-full w-[25px] items-center justify-center border-l border-[#aaa]">
          <svg viewBox="0 0 14 14" className="h-[14px] w-[14px] stroke-white" strokeWidth="2.400" aria-hidden="true"><path d="M1 1l12 12M13 1L1 13" /></svg>
        </button>
      </header>
      <div className="flex min-h-0 flex-1 flex-col border-x border-[#5a5a5a] px-[17px] pb-4 pt-5">
        <div className="relative z-10 -mb-[2px] flex h-[28px] shrink-0 pl-2">
          <button type="button" role="tab" aria-selected="true" className="w-[78px] border border-b-0 border-[#8a8a8a] bg-[#efefef] pb-[6px] pr-[14px] text-lg font-bold leading-5">常规</button>
        </div>
        <div className="flex min-h-0 flex-1 border-t-[3px] border-double border-[#8a8a8a] bg-[#e9e9e9]">
          <nav className="w-[155px] bg-[#f0f0f0]">
            <ul>
              {navItems.map((t) => (
                <li key={t} className="flex h-6 items-center pl-[21px]">
                  <button type="button" className={`h-[22px] px-[2px] leading-5 ${t === "循环中断" ? "bg-[#c5d0d6]" : ""}`}>{t}</button>
                </li>
              ))}
            </ul>
          </nav>
          <div className="flex w-[10px] flex-col gap-3 border-x border-[#8f8f8f] bg-[#dcdcdc] pt-[166px]">
            <button type="button" aria-label="收起" className="flex h-[29px] items-center justify-center border-y border-[#8f8f8f] bg-[#c4c4c4]"><span className="flex rotate-180"><Tri c="fill-black scale-75" /></span></button>
            <button type="button" aria-label="展开" className="flex h-[29px] items-center justify-center border-y border-[#8f8f8f] bg-[#c4c4c4]"><Tri c="fill-black scale-75" /></button>
          </div>
          <div className="min-w-0 flex-1 pl-[15px] pr-[31px] pt-[12px]">
            <div className="flex items-center gap-4 pl-1">
              <h3 className="text-lg font-bold leading-7">循环中断</h3>
              <span className="mt-[14px] h-px flex-1 bg-black" />
            </div>
            <form className="relative mt-[6px] grid grid-cols-[240px_1fr] gap-x-[15px] gap-y-[7px] bg-[#cbcbcb] pb-[15px] pr-[15px] pt-[29px] font-['Open_Sans','Noto_Sans_CJK_TC',sans-serif]">
              <label htmlFor="cycle" className="text-right leading-[23px]">循环时间 (μs)：</label>
              <span className="relative flex">
                <input id="cycle" value={cycle} onChange={(e) => setCycle(e.target.value)} className={`${field} w-[150px]`} />
                <span className="absolute left-[76px] top-[3px] h-[17px] w-px bg-black" />
              </span>
              <label htmlFor="phase" className="text-right leading-[23px]">相移 (μs)：</label>
              <input id="phase" value={phase} onChange={(e) => setPhase(e.target.value)} className={`${field} w-full`} />
              <div role="tooltip" className="absolute left-[255px] top-[53px] flex h-[44px] w-[283px] items-start gap-[3px] bg-[#ffff87]/45 pl-[3px] leading-5 text-[#000]/55">
                <span className="opacity-60"><Ic n="info" /></span>
                <p className="w-[220px]">输入一个介于 500 和 60000000 之间的值。</p>
                <svg viewBox="0 0 14 14" className="absolute right-[3px] top-[2px] h-[14px] w-[14px] stroke-[#8a2020]" strokeWidth="2.400" aria-hidden="true"><path d="M1 1l12 12M13 1L1 13" /></svg>
              </div>
              <span className="absolute left-[508px] top-[57px] h-[36px] w-[36px] rounded-full bg-[#ff3c3c]/60" />
              <svg viewBox="0 0 16 24" className="absolute left-[526px] top-[76px] h-6 w-4" aria-hidden="true"><path d="M.7.7v18l4.300-4 3.200 7.500 3.500-1.500-3.200-7.200h6z" fill="#fff" stroke="#222" /></svg>
            </form>
          </div>
        </div>
      </div>
      <footer className="flex h-[55px] shrink-0 items-center justify-end gap-2 border-x border-b-2 border-[#5a5a5a] bg-[#b0b0b0] pb-px pr-4">
        <button type="button" className="h-6 w-[112px] border-2 border-[#4d9650] bg-linear-to-b from-[#d9f5d4] via-[#7fd27a] to-[#c4f0bd] leading-5">确定</button>
        <button type="button" className="h-6 w-[112px] border-2 border-[#8f8f8f] bg-linear-to-b from-[#f6f6f6] via-[#d2d2d2] to-[#ececec] leading-5">取消</button>
      </footer>
      <div className="flex h-[8px] shrink-0 items-end justify-end bg-[#1b1b1b]">
        <span className="h-[8px] w-[9px] border-b-2 border-r-2 border-white" />
      </div>
    </section>
  );
}

const WinBtns = ({ cross }: { cross?: boolean }) => (
  <svg viewBox="0 0 84 16" className="h-4 w-[84px]" fill="#fff" aria-hidden="true">
    <path d="M0 11h14v4H0zM26 1h11v10h-3v-7h-8zM22 5h10v10H22zM46 1h14v2H46zM46 4h14v11H46z" />
    {cross && <path d="M68 2l13 13M81 2L68 15" stroke="#fff" strokeWidth="2.600" />}
  </svg>
);

const sideTabs: [string, string, string][] = [
  ["instr", "指令", "h-[91px] text-black font-medium bg-[#efefef]"],
  ["diag", "测试", "h-[92px] text-[#555] bg-[#d6d6d6]"],
  ["tasks", "任务", "h-[92px] text-[#555] bg-[#d6d6d6]"],
  ["book", "库", "h-[72px] text-[#555] bg-[#d6d6d6]"],
];
const inspectorTabs: [string, string][] = [["props", "属性"], ["infoTab", "信息"], ["diag", "诊断"]];
const taskTabs: [string, string][] = [["overview", "总览"], ["ob", "Main"], ["screen", "根画面"], ["tagTable", "默认变量表"], ["tagTable", "默认变量表"], ["ob", "Cyclic interr..."]];

export default function App() {
  return (
    <div className="relative flex h-screen flex-col overflow-hidden bg-[#b0b0b0] font-['Open_Sans','Noto_Sans_CJK_SC',sans-serif] text-[15px] text-black">
      <header className="flex h-7 shrink-0 items-center bg-[linear-gradient(#888,#606060_8px,#1b1b1b_9px,#1b1b1b)] pl-[7px] pr-[6px] text-base text-[#ececec]">
        <span className="flex w-[28px] flex-col text-[10px] font-bold leading-[14px] text-[#b9c0e6]"><span className="text-white">TIA</span><span>V13</span></span>
        <h1 className="flex items-center whitespace-pre font-medium">
          <span>Siemens</span><span className="mx-3">-</span><span>C:\Users\11025\Desktop\</span>
          <span className="text-[17px] font-semibold leading-6">博途项目\项目1\项目1</span>
        </h1>
        <span className="ml-auto flex">
          <svg viewBox="0 0 54 16" className="h-4 w-[54px]" fill="#fff" aria-hidden="true"><path d="M0 12h11v2H0zM24 1h8v10h-2V4h-6zM21 5h8v10h-8z" /><path d="M41 2l11 12M52 2L41 14" stroke="#fff" strokeWidth="2.200" /></svg>
        </span>
      </header>

      <div className="flex h-[64px] shrink-0 items-center justify-between border-b-2 border-[#50545c] bg-[#cbcbcb]">
        <div className="flex flex-col">
          <nav className="flex h-[32px] items-center gap-[21px] pl-[15px] pt-[2px]">
            {menus.map((m) => <button key={m} type="button" className="whitespace-nowrap">{m}</button>)}
          </nav>
          <div className="flex h-[29px] items-center pl-3">
            <Tool n="newProject" /><Tool n="openProject" />
            <button type="button" className="flex items-center gap-2 whitespace-nowrap pl-px text-base"><Ic n="save" />保存项目</button>
            <span className="w-[8px]" /><Tool n="print" /><Sep />
            <Tool n="cut" /><Tool n="copy" /><Tool n="paste" /><Tool n="del" /><Sep />
            <Tool n="undo" /><Drop /><Tool n="redo" /><Drop /><Sep />
            <Tool n="compile" /><Tool n="download" /><Tool n="upload" /><Tool n="simulate" /><Tool n="runtime" /><Sep />
            <button type="button" className="flex items-center gap-2 pl-[2px] text-base"><Ic n="online" />在线</button>
            <button type="button" className="flex items-center gap-2 pl-[10px] pr-[9px] text-base text-[#8a8a8a]"><Ic n="offline" />离线</button><Sep />
            <Tool n="access" /><Tool n="startCpu" /><Tool n="stopCpu" /><Sep /><Tool n="crossRef" /><Sep /><Tool n="splitH" /><Tool n="splitV" />
          </div>
        </div>
        <div className="flex flex-col items-end pr-[29px] pt-[8px]">
          <span className="pr-[30px] text-lg font-medium leading-5 text-[#1c1c1c]">Totally Integrated Automation</span>
          <span className="text-xl font-semibold leading-[22px] text-[#6d6d6d]">PORTAL</span>
        </div>
      </div>

      <div className="flex min-h-0 flex-1">
        <aside className="flex w-[30px] shrink-0 flex-col border-r border-[#3a3d4d]">
          <div className="h-[32px] border-b-2 border-[#e8e8e8]" />
          <div className="flex h-[276px] justify-center border-b-2 border-[#e0e0e0] pr-1 pt-[100px]">
            <button type="button" className="h-[78px] rotate-180 whitespace-nowrap text-base font-bold leading-5 text-[#f2f2f2] [text-orientation:sideways] [writing-mode:vertical-rl]">PLC 编程</button>
          </div>
        </aside>

        <section className="flex w-[431px] shrink-0 flex-col bg-[#c2c2c2]">
          <header className="flex h-[30px] shrink-0 items-center justify-between bg-[#b0b0b0] pl-[7px] pr-[10px] text-lg font-bold text-[#f4f4f4]">
            <h2>项目树</h2>
            <span className="flex items-center gap-[10px]"><Ic n="pause" s="w-[18px] h-[18px]" /><span className="flex rotate-180"><Tri c="fill-white scale-150" /></span></span>
          </header>
          <div className="flex h-[35px] shrink-0 items-end border-b border-t-4 border-b-[#8a8a8a] border-t-[#f2f2f2] bg-[#cbcbcb] pl-2">
            <button type="button" role="tab" aria-selected="true" className="relative top-px h-[27px] w-[78px] border border-b-0 border-[#7a7a7a] bg-linear-to-b from-[#f6f6f6] to-[#e9e9e9] pb-1 pr-[14px] text-lg font-bold leading-5">设备</button>
          </div>
          <div className="flex h-[34px] shrink-0 items-center bg-[#e9e9e9] pl-1 pr-1">
            <Tool n="newItem" /><Tool n="back" /><Tool n="forward" />
            <span className="flex-1" />
            <Tool n="list" look={ACTIVE} /><Tool n="gridGo" />
          </div>
          <div className="h-[26px] shrink-0" />
          <ProjectTree />
          <button type="button" className="flex h-[29px] shrink-0 items-center border-t-[3px] border-[#20222e] bg-linear-to-b from-[#ececec] to-[#c6c6c6] text-lg font-bold">
            <span className="flex h-full w-[26px] items-center justify-center border-r border-[#777] pr-1">
              <svg viewBox="0 0 10 14" className="h-[12px] w-2 stroke-black" strokeWidth="2.500" fill="none" aria-hidden="true"><path d="M2 1l6 6-6 6" /></svg>
            </span>
            <span className="pl-[6px]">详细视图</span>
          </button>
        </section>
        <div className="w-1 shrink-0 bg-[#20222e]" />

        <main className="flex min-w-0 flex-1 flex-col">
          <header className="flex h-[30px] shrink-0 items-center justify-between pl-[6px] pr-[5px] text-[#f4f4f4]">
            <ol className="flex items-center">
              {crumbs.map((c, k) => (
                <li key={c} className="flex items-center whitespace-nowrap font-semibold">
                  {k > 0 && <span className="mx-[13px]"><Tri c="fill-white" /></span>}
                  <a href="#block" className="text-[17px]">{c}</a>
                </li>
              ))}
            </ol>
            <WinBtns cross />
          </header>
          <div className="h-[35px] shrink-0 border-b border-t-4 border-b-[#8a8a8a] border-t-[#f2f2f2] bg-[#cbcbcb]" />
          <div className="flex h-[34px] shrink-0 items-center bg-[#e9e9e9] pl-[10px] pr-[14px]">
            <Tool n="netIns" /><Tool n="netDel" /><Tool n="rowIns" /><Tool n="rowIns" /><Sep />
            <Tool n="dbStack" /><Sep />
            <Tool n="treeGray" /><Tool n="netOpen" /><Tool n="netClose" /><Tool n="comment" look={ACTIVE} />
            <Tool n="tagPurple" /><Drop n="ddBlack" /><Tool n="tagGray" /><Drop n="ddBlack" />
            <Tool n="details" look={ACTIVE} /><Tool n="favGray" look="bg-[#c8d0d4]" /><Sep />
            <Tool n="arrUp" /><Tool n="arrDown" /><Tool n="syncA" /><Tool n="syncB" /><Tool n="check" /><Sep />
            <Tool n="indent" /><Tool n="outdent" /><Sep /><Tool n="findTag" /><Tool n="glasses" /><Sep /><Tool n="snapshot" />
            <span className="flex-1" /><Tool n="layoutUser" />
          </div>
          <h3 className="h-[23px] shrink-0 pr-1 text-center text-base font-bold leading-[23px] text-white">块接口</h3>
          <div className="flex h-[10px] shrink-0 justify-center gap-[14px] border-b border-t border-[#8a8a8a] bg-[#dadada]">
            <button type="button" aria-label="收起" className="flex w-[29px] items-center justify-center border-x border-[#a0a0a0]"><span className="-rotate-180"><Tri open c="fill-[#888] scale-75" /></span></button>
            <button type="button" aria-label="展开" className="flex w-[29px] items-center justify-center border-x border-[#a0a0a0] bg-[#c0c0c0]"><Tri open c="fill-black scale-75" /></button>
          </div>

          <div className="flex min-h-0 flex-1 flex-col bg-white">
            <div className="flex h-[47px] shrink-0 gap-[2px] bg-[#e9e9e9] pb-3 pl-[3px]">
              {ladder.map(([t, d]) => (
                <button key={t} type="button" aria-label={t} className="relative flex w-10 items-center justify-center bg-white pt-2">
                  <svg viewBox="0 0 32 20" className="h-5 w-8" fill="none" stroke="#10103a" strokeWidth="2.400" aria-hidden="true">{d}</svg>
                  {t === "空功能框" && <span className="absolute left-0 w-full text-center text-[10px] font-semibold text-[#10103a]">??</span>}
                </button>
              ))}
              {["SR", "RS"].map((t) => <button key={t} type="button" className="w-[41px] bg-white pt-2 text-[10px] font-semibold text-[#10103a]">{t}</button>)}
            </div>
            <div className="h-[26px] shrink-0 bg-[#d8d8d8]" />
            <div className="h-[38px] shrink-0" />
            <div className="h-[26px] shrink-0 bg-[#d8d8d8]" />
            <div className="flex-1" />
            <div className="flex h-[24px] shrink-0 items-center justify-end gap-[22px] bg-[#e9e9e9] pr-[22px]">
              <span className="relative flex">
                <select aria-label="缩放" className="h-[22px] w-[195px] appearance-none border border-[#8a8a8a] bg-white pl-[3px] text-[15px] leading-5">
                  <option>100%</option>
                </select>
                <span className="pointer-events-none absolute right-0 top-0 flex h-[22px] w-5 items-center justify-center border border-[#8a8a8a] bg-[#d2d2d2]"><Tri open /></span>
              </span>
              <span className="flex w-[84px] flex-col">
                <input type="range" aria-label="缩放滑块" defaultValue={34} className="h-[13px] w-full appearance-none bg-[linear-gradient(#8a8a8a,#8a8a8a)] bg-[length:100%_2px] bg-center bg-no-repeat [&::-webkit-slider-thumb]:h-3 [&::-webkit-slider-thumb]:w-[8px] [&::-webkit-slider-thumb]:appearance-none [&::-webkit-slider-thumb]:rounded-b-full [&::-webkit-slider-thumb]:border [&::-webkit-slider-thumb]:border-[#777] [&::-webkit-slider-thumb]:bg-[#ddd]" />
                <svg viewBox="0 0 84 4" className="mt-px h-1 w-full" stroke="#222" strokeWidth="1.500" aria-hidden="true"><path d="M1 0v4M7 0v4M13 0v4M18 0v4M24 0v4M30 0v4M36 0v4M42 0v4M48 0v4M54 0v4M60 0v4M66 0v4M72 0v4M77 0v4M83 0v4" /></svg>
              </span>
            </div>
          </div>

          <section className="flex h-[398px] shrink-0 flex-col overflow-hidden border-t-[3px] border-[#20222e] bg-[#efefef]">
            <div className="flex h-[30px] shrink-0 items-end justify-end gap-[2px] bg-[#b0b0b0] pr-[6px]">
              {inspectorTabs.map(([i, t]) => (
                <button key={t} type="button" role="tab" className={`flex h-[26px] w-[93px] items-center gap-1 border-l-2 border-r border-t border-[#8a8a8a] pl-[2px] text-lg font-bold ${t === "信息" ? "bg-[#efefef] text-black" : "bg-[#d6d6d6] font-semibold text-[#555]"}`}>
                  <Ic n={i} />{t}
                </button>
              ))}
              <svg viewBox="0 0 62 16" className="mb-[6px] ml-[22px] h-4 w-[62px]" fill="#fff" aria-hidden="true"><path d="M4 0h11v10h-3V3H4zM0 4h10v10H0zM46 3h15l-7 9z" /><path d="M24 2h13v11H24zM24 5h13M24 8h13" fill="none" stroke="#fff" strokeWidth="1.500" /></svg>
            </div>
            <div className="h-[36px] shrink-0 border-b border-t-4 border-b-[#8a8a8a] border-t-[#f2f2f2] bg-[#cbcbcb]" />
            <div className="h-[34px] shrink-0 bg-[#e9e9e9]" />
            <div className="h-[22px] shrink-0" />
            <Messages />
          </section>
        </main>

        <aside className="flex w-[31px] shrink-0 flex-col gap-[3px] border-l-2 border-[#3a3d4d] pr-1">
          <button type="button" aria-label="展开" className="flex h-[36px] items-center justify-center pb-1 pr-1"><span className="flex rotate-180"><Tri c="fill-white scale-150" /></span></button>
          {sideTabs.map(([i, t, c]) => (
            <button key={t} type="button" className={`flex shrink-0 flex-col items-center gap-1 border border-[#8a8a8a] pt-[2px] ${c}`}>
              <Ic n={i} />
              <span className="text-lg leading-5 [text-orientation:sideways] [writing-mode:vertical-rl]">{t}</span>
            </button>
          ))}
        </aside>
      </div>

      <footer className="flex h-[37px] shrink-0 items-center bg-[#1b1b1b] pb-px pr-[3px]">
        <button type="button" className="flex w-[226px] items-center gap-3 pl-[43px] text-lg font-bold text-[#ececec]"><span className="flex rotate-180"><Tri c="fill-white scale-150" /></span>Portal 视图</button>
        <div className="flex gap-[3px]">
          {taskTabs.map(([i, t], k) => (
            <button key={k} type="button" className={`flex h-[26px] w-[142px] items-center gap-[6px] whitespace-nowrap pl-[3px] ${k === 5 ? "bg-white" : "bg-[#c2c2c2]"}`}><Ic n={i} />{t}</button>
          ))}
        </div>
        <div role="status" className="ml-auto flex items-center gap-[7px] font-['Open_Sans','Noto_Sans_CJK_TC',sans-serif] text-base text-[#e4e4e4]">
          <Ic n="ok" /><span className="w-[329px]">下载完成（错误：0：警告：0）。</span>
          <Ic n="pc" />
        </div>
      </footer>

      <div className="absolute left-0 top-[62px] flex h-[64px] w-[12px] items-end justify-center rounded-full border-2 border-[#5f5f5f] bg-[#d0d0d0] pb-px">
        <span className="h-[46px] w-1 rounded-full bg-[#dd5330]" />
      </div>

      <Dialog />
    </div>
  );
}
